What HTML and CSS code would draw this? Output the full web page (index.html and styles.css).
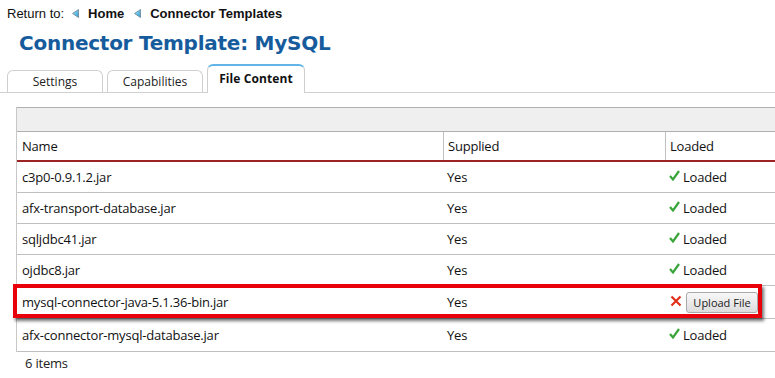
FILE: index.html
```html
<!DOCTYPE html>
<html>
<head>
<meta charset="utf-8">
<link rel="stylesheet" href="styles.css">
</head>
<body>
<div class="page">
  <div class="crumbs">
    <span class="crumb-label">Return to:</span>
    <span class="crumb"><svg class="arrow" width="7" height="9" viewBox="0 0 7 9"><defs><linearGradient id="ag" x1="0" y1="0" x2="1" y2="1"><stop offset="0" stop-color="#a6e4fb"/><stop offset="1" stop-color="#2c9bd4"/></linearGradient></defs><path d="M6.5 0.5 L0.5 4.5 L6.5 8.5 Z" fill="url(#ag)" stroke="#6d8494" stroke-width="0.8"/></svg>Home</span>
    <span class="crumb"><svg class="arrow" width="7" height="9" viewBox="0 0 7 9"><path d="M6.5 0.5 L0.5 4.5 L6.5 8.5 Z" fill="url(#ag)" stroke="#6d8494" stroke-width="0.8"/></svg>Connector Templates</span>
  </div>
  <h1 class="title">Connector Template: MySQL</h1>
  <div class="tabs">
    <div class="tab">Settings</div>
    <div class="tab">Capabilities</div>
    <div class="tab active">File Content</div>
  </div>
  <div class="content">
    <div class="grid">
      <div class="toolbar"></div>
      <div class="row head">
        <div class="cell c1">Name</div>
        <div class="cell c2">Supplied</div>
        <div class="cell c3">Loaded</div>
      </div>
      <div class="row">
        <div class="cell c1">c3p0-0.9.1.2.jar</div>
        <div class="cell c2">Yes</div>
        <div class="cell c3"><svg class="check" width="11" height="11" viewBox="0 0 11 11"><path d="M1 6 L4 9.5 L10 1" fill="none" stroke="#3aa53a" stroke-width="2.2"/></svg>Loaded</div>
      </div>
      <div class="row">
        <div class="cell c1">afx-transport-database.jar</div>
        <div class="cell c2">Yes</div>
        <div class="cell c3"><svg class="check" width="11" height="11" viewBox="0 0 11 11"><path d="M1 6 L4 9.5 L10 1" fill="none" stroke="#3aa53a" stroke-width="2.2"/></svg>Loaded</div>
      </div>
      <div class="row">
        <div class="cell c1">sqljdbc41.jar</div>
        <div class="cell c2">Yes</div>
        <div class="cell c3"><svg class="check" width="11" height="11" viewBox="0 0 11 11"><path d="M1 6 L4 9.5 L10 1" fill="none" stroke="#3aa53a" stroke-width="2.2"/></svg>Loaded</div>
      </div>
      <div class="row">
        <div class="cell c1">ojdbc8.jar</div>
        <div class="cell c2">Yes</div>
        <div class="cell c3"><svg class="check" width="11" height="11" viewBox="0 0 11 11"><path d="M1 6 L4 9.5 L10 1" fill="none" stroke="#3aa53a" stroke-width="2.2"/></svg>Loaded</div>
      </div>
      <div class="row tall highlight">
        <div class="cell c1">mysql-connector-java-5.1.36-bin.jar</div>
        <div class="cell c2">Yes</div>
        <div class="cell c3"><svg class="cross" width="12" height="12" viewBox="0 0 12 12"><path d="M1.5 1.5 L10.5 10.5 M10.5 1.5 L1.5 10.5" stroke="#e0301a" stroke-width="2.2"/></svg><button class="upload">Upload File</button></div>
        <div class="redbox"></div>
      </div>
      <div class="row tall">
        <div class="cell c1">afx-connector-mysql-database.jar</div>
        <div class="cell c2">Yes</div>
        <div class="cell c3"><svg class="check" width="11" height="11" viewBox="0 0 11 11"><path d="M1 6 L4 9.5 L10 1" fill="none" stroke="#3aa53a" stroke-width="2.2"/></svg>Loaded</div>
      </div>
    </div>
    <div class="count">6 items</div>
  </div>
</div>
</body>
</html>
```
FILE: styles.css
```css
html, body {
  margin: 0;
  padding: 0;
  background: #fff;
  overflow: hidden;
}
.page {
  width: 775px;
  height: 378px;
  overflow: hidden;
  font-family: "Open Sans", "Noto Sans", sans-serif;
  color: #111;
}
.crumbs {
  display: flex;
  align-items: center;
  height: 26px;
  padding-left: 7px;
  font-family: "Liberation Sans", Arial, sans-serif;
  font-size: 13px;
}
.crumb-label {
  margin-right: 8px;
}
.crumb {
  display: flex;
  align-items: center;
  font-weight: bold;
  margin-right: 10px;
}
.arrow {
  margin-right: 9px;
}
.title {
  margin: 3px 0 0 19px;
  font-family: "DejaVu Sans", Verdana, sans-serif;
  font-weight: bold;
  font-size: 20px;
  line-height: 28px;
  color: #165c9c;
  letter-spacing: -0.25px;
}
.tabs {
  display: flex;
  align-items: flex-end;
  height: 29px;
  margin-top: 6px;
  padding-left: 7px;
  gap: 4px;
  border-bottom: 1px solid #d0d0d0;
}
.tab {
  width: 94px;
  height: 21px;
  border: 1px solid #cfcfcf;
  border-bottom: none;
  border-radius: 6px 6px 0 0;
  font-size: 12px;
  line-height: 22px;
  text-align: center;
  color: #222;
  background: #fff;
}
.tab.active {
  height: 27px;
  margin-bottom: -1px;
  border-top: 2px solid #62b5e6;
  font-weight: bold;
  line-height: 26px;
  color: #111;
  width: 96px;
  letter-spacing: 0.1px;
}
.content {
  padding: 14px 0 0 16px;
}
.grid {
  width: 780px;
  border-left: 1px solid #c8c8c8;
  font-size: 13px;
  letter-spacing: -0.2px;
}
.toolbar {
  height: 23px;
  background: #efefef;
  border-top: 1px solid #b0b0b0;
  border-bottom: 1px solid #b0b0b0;
}
.row {
  position: relative;
  display: flex;
  height: 30px;
  border-bottom: 1px solid #c0c0c0;
}
.row.head {
  height: 28px;
  border-bottom: 2px solid #9e2424;
}
.row.tall {
  height: 32px;
}
.cell {
  display: flex;
  align-items: center;
  padding-left: 5px;
  box-sizing: border-box;
}
.c1 { width: 426px; }
.c2 { width: 222px; padding-left: 4px; }
.c3 { flex: 1; padding-left: 4px; }
.head .c2, .head .c3 {
  border-left: 1px solid #c0c0c0;
}
.check {
  margin-right: 3px;
  margin-top: -3px;
}
.cross {
  margin-right: 4px;
  margin-left: 1px;
  margin-top: -3px;
}
.upload {
  height: 21px;
  width: 72px;
  padding: 0;
  font-family: "Open Sans", "Noto Sans", sans-serif;
  font-size: 11px;
  letter-spacing: 0;
  color: #222;
  border: 1px solid #a9a9a9;
  border-radius: 3px;
  background: linear-gradient(#f8f8f8, #dcdcdc);
}
.redbox {
  position: absolute;
  left: -4px;
  top: -2px;
  width: 741px;
  height: 26px;
  border: 4px solid #e8000b;
  box-shadow: 2px 3px 3px rgba(0, 0, 0, 0.55);
  pointer-events: none;
}
.count {
  padding: 2px 0 0 9px;
  font-size: 13px;
  letter-spacing: -0.2px;
  color: #222;
}
```
